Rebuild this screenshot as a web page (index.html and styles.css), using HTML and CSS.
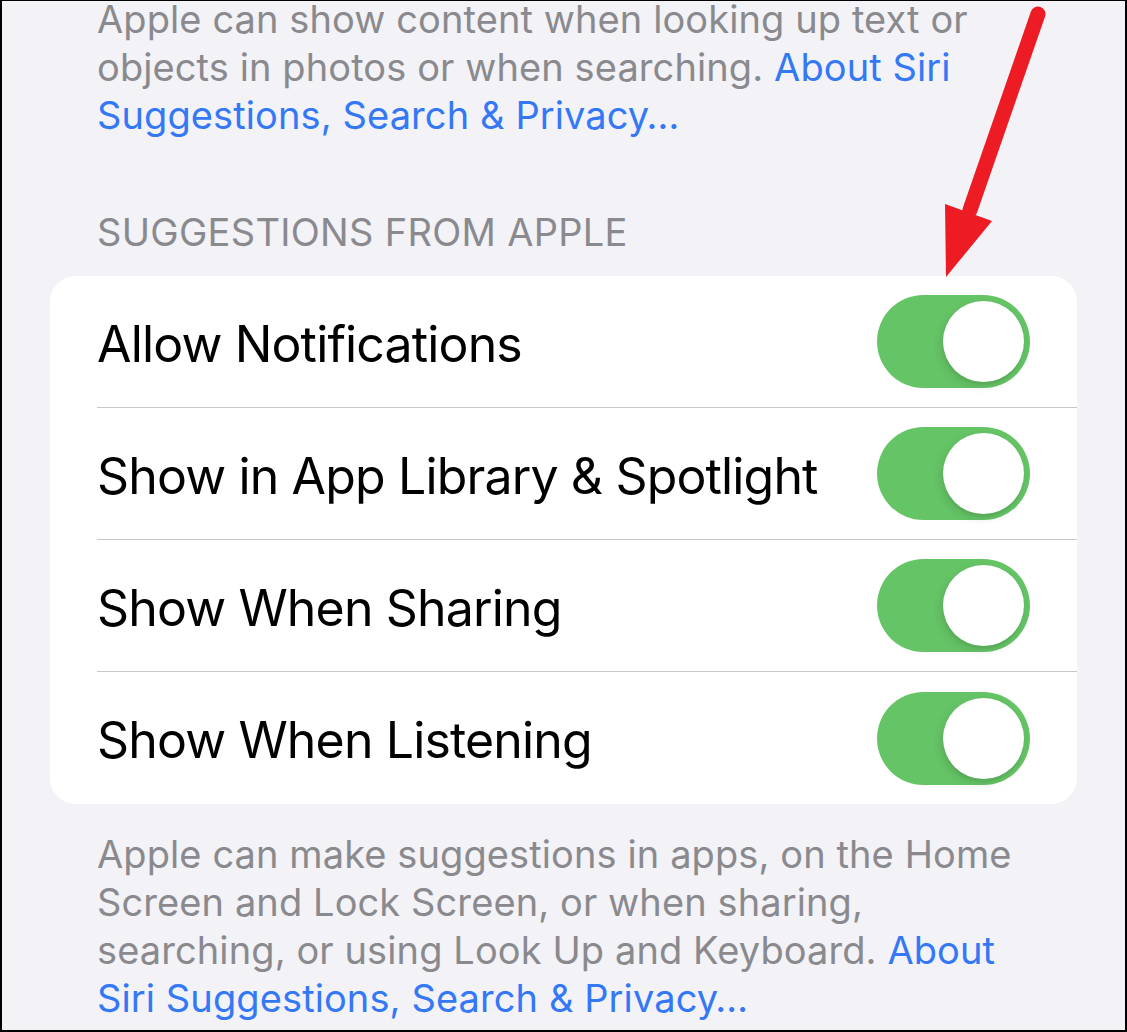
FILE: index.html
```html
<!DOCTYPE html>
<html lang="en">
<head>
<meta charset="utf-8">
<title>Siri Suggestions</title>
<link rel="stylesheet" href="styles.css">
</head>
<body>
<div class="frame">
  <p class="note note-top">Apple can show content when looking up text or<br>objects in photos or when searching. <a class="link" href="#">About Siri<br>Suggestions, Search &amp; Privacy…</a></p>

  <h2 class="section-title">SUGGESTIONS FROM APPLE</h2>

  <ul class="card">
    <li class="row"><span class="label">Allow Notifications</span><span class="switch on"><span class="knob"></span></span></li>
    <li class="row"><span class="label">Show in App Library &amp; Spotlight</span><span class="switch on"><span class="knob"></span></span></li>
    <li class="row"><span class="label">Show When Sharing</span><span class="switch on"><span class="knob"></span></span></li>
    <li class="row"><span class="label">Show When Listening</span><span class="switch on"><span class="knob"></span></span></li>
  </ul>

  <p class="note note-bottom">Apple can make suggestions in apps, on the Home<br>Screen and Lock Screen, or when sharing,<br>searching, or using Look Up and Keyboard. <a class="link" href="#">About<br>Siri Suggestions, Search &amp; Privacy…</a></p>

  <svg class="arrow" width="1127" height="1032" viewBox="0 0 1127 1032" aria-hidden="true">
    <line x1="1038" y1="14" x2="970" y2="210" stroke="#ED1C24" stroke-width="15" stroke-linecap="round"/>
    <polygon points="945,204 992,221 946,277" fill="#ED1C24"/>
  </svg>
</div>
</body>
</html>
```

FILE: styles.css
```css
* { box-sizing: border-box; }

html, body {
  margin: 0;
  padding: 0;
  background: #000;
}

.frame {
  position: relative;
  width: 1127px;
  height: 1032px;
  overflow: hidden;
  background: #f2f2f7;
  border-style: solid;
  border-color: #000;
  border-width: 1px 2px 2px 2px;
  font-family: Inter, "Noto Sans", sans-serif;
  padding: 0 48px;
}

.note {
  margin: 0;
  padding-left: 47px;
  font-size: 38px;
  line-height: 48px;
  color: #8a8a8e;
  letter-spacing: 0.1px;
}

.note-top {
  margin-top: -6px;
}

.link {
  color: #3478f6;
  text-decoration: none;
}

.section-title {
  margin: 69px 0 0;
  padding-left: 47px;
  font-size: 38px;
  line-height: 48px;
  font-weight: 400;
  color: #8a8a8e;
  letter-spacing: 0.3px;
}

.card {
  list-style: none;
  margin: 20px 0 0;
  padding: 0 0 0 47px;
  background: #fff;
  border-radius: 26px;
  overflow: hidden;
}

.row {
  display: flex;
  align-items: center;
  justify-content: space-between;
  height: 132px;
  padding-right: 47px;
  border-bottom: 1px solid #c8c7cc;
}

.row:last-child {
  border-bottom: none;
}

.label {
  font-size: 50px;
  color: #000;
  letter-spacing: -0.85px;
  padding-top: 4px;
}

.switch {
  position: relative;
  flex: none;
  width: 153px;
  height: 93px;
  border-radius: 47px;
  background: #65c466;
}

.knob {
  position: absolute;
  top: 6px;
  right: 6px;
  width: 81px;
  height: 81px;
  border-radius: 50%;
  background: #fff;
  box-shadow: -2px 4px 10px rgba(0, 0, 0, 0.12), 0 3px 1px rgba(0, 0, 0, 0.04);
}

.note-bottom {
  margin-top: 26px;
}

.arrow {
  position: absolute;
  left: -2px;
  top: -1px;
  pointer-events: none;
}
```
